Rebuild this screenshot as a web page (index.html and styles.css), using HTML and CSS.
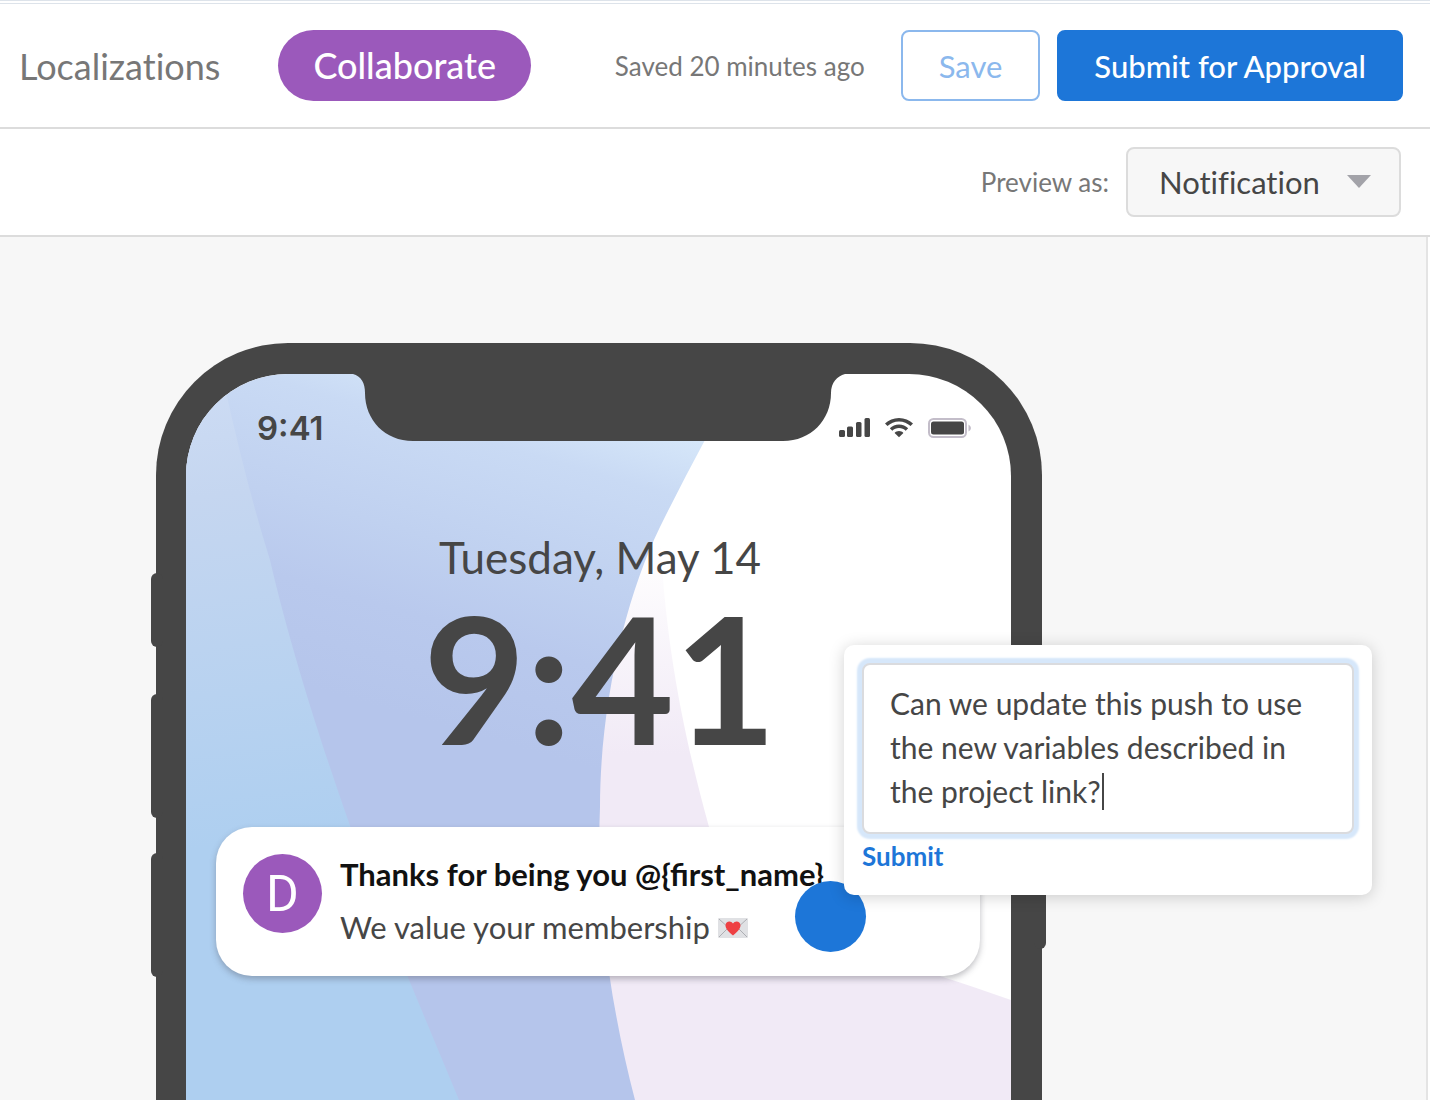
FILE: index.html
```html
<!DOCTYPE html>
<html lang="en">
<head>
  <meta charset="UTF-8" />
  <meta name="viewport" content="width=device-width, initial-scale=1" />
  <title>Push preview</title>
  <link rel="stylesheet" href="styles.css">
</head>
<body>
  <header class="topbar">
    <nav class="tabs">
      <a href="#localizations" class="tab">Localizations</a>
      <a href="#collaborate" class="tab active">Collaborate</a>
    </nav>
    <div class="actions">
      <span class="saved">Saved 20 minutes ago</span>
      <button type="button" class="btn btn-outline">Save</button>
      <button type="button" class="btn btn-primary">Submit for Approval</button>
    </div>
  </header>

  <div class="toolbar">
    <label for="previewAs">Preview as:</label>
    <div class="select">
      <select id="previewAs">
        <option>Notification</option>
      </select>
      <svg class="select-arrow" viewBox="0 0 24 13" aria-hidden="true"><path d="M0 0h24L12 13z" /></svg>
    </div>
  </div>

  <main class="stage">
    <div class="phone">
      <span class="side-button mute"></span>
      <span class="side-button volume-up"></span>
      <span class="side-button volume-down"></span>
      <span class="side-button power"></span>

      <div class="screen">
        <svg class="wallpaper" viewBox="0 0 825 1600" preserveAspectRatio="xMidYMin slice" aria-hidden="true">
          <defs>
            <linearGradient id="sky" gradientUnits="userSpaceOnUse" x1="60" y1="0" x2="120" y2="460">
              <stop offset="0" stop-color="#cddcf4" />
              <stop offset="0.25" stop-color="#c5d6f0" />
              <stop offset="1" stop-color="#aecff0" />
            </linearGradient>
            <linearGradient id="iris" gradientUnits="userSpaceOnUse" x1="530" y1="60" x2="420" y2="440">
              <stop offset="0" stop-color="#d8e9fa" />
              <stop offset="0.18" stop-color="#c9daf4" />
              <stop offset="0.45" stop-color="#c0d1f0" />
              <stop offset="0.65" stop-color="#b9c9ed" />
              <stop offset="0.9" stop-color="#b5c5eb" />
            </linearGradient>
            <linearGradient id="petal" gradientUnits="userSpaceOnUse" x1="0" y1="170" x2="0" y2="380">
              <stop offset="0" stop-color="#fff" />
              <stop offset="1" stop-color="#f1eaf6" />
            </linearGradient>
          </defs>
          <rect width="825" height="1600" fill="#fff" />
          <path d="M474 153C478 270 500 370 523 453C570 560 700 580 825 626V1600H400V153z" fill="url(#petal)" />
          <path d="M0 0H556Q512 76 474 153C440 222 414 330 414 433C410 530 424 630 449 726L700 1600H0z" fill="url(#iris)" />
          <path d="M0 0H36Q60 110 84 186C108 290 156 440 216 589L273 726L640 1600H0z" fill="url(#sky)" />
        </svg>
        <svg class="notch" viewBox="0 0 492 67" aria-hidden="true">
          <path d="M0 0C8 2 12 9 12 19C12 46 32 67 60 67H430C458 67 478 46 478 19C478 9 484 2 492 0z" />
        </svg>

        <div class="status">
          <span class="status-time">9:41</span>
          <div class="status-icons">
            <svg width="31" height="20" viewBox="0 0 31 20" aria-hidden="true">
              <rect x="0" y="12" width="6" height="7" rx="1.5" />
              <rect x="8" y="8.5" width="6" height="10.5" rx="1.5" />
              <rect x="17" y="4" width="5.5" height="15" rx="1.5" />
              <rect x="25.5" y="0" width="5.5" height="19" rx="1.5" />
            </svg>
            <svg width="28" height="20" viewBox="0 0 28 20" aria-hidden="true">
              <path d="M14 0C8.5 0 3.6 2.1 0 5.6L2.5 8.1C5.5 5.2 9.5 3.5 14 3.5S22.5 5.2 25.5 8.1L28 5.6C24.4 2.1 19.5 0 14 0z" />
              <path d="M14 6.5C10.4 6.5 7.2 7.9 4.8 10.2L7.3 12.7C9.1 11 11.4 10 14 10S18.9 11 20.7 12.7L23.2 10.2C20.8 7.9 17.6 6.5 14 6.5z" />
              <path d="M14 13C12.3 13 10.7 13.7 9.6 14.9L14 19.3L18.4 14.9C17.3 13.7 15.7 13 14 13z" />
            </svg>
            <svg width="44" height="20" viewBox="0 0 44 20" aria-hidden="true">
              <rect x="1" y="1" width="37" height="18" rx="4.5" class="battery-case" />
              <rect x="3" y="3.5" width="33" height="13" rx="2.5" />
              <path d="M40.5 6.5Q43 8 43 10T40.5 13.5z" class="battery-tip" />
            </svg>
          </div>
        </div>

        <div class="clock">
          <div class="date">Tuesday, May 14</div>
          <div class="time">9:41</div>
        </div>

        <article class="push">
          <div class="avatar">D</div>
          <div class="push-body">
            <h2>Thanks for being you @{first_name}</h2>
            <p>We value your membership
              <svg class="letter" viewBox="0 0 30 20" role="img" aria-label="love letter">
                <rect width="30" height="20" rx="1" fill="#e0e1e4" />
                <path d="M1 1L12 11M29 1L18 11M1 19L10 10M29 19L20 10" stroke="#adaeb3" fill="none" />
                <path d="M15 17.5C11 14 7.5 11 7.5 7.5C7.5 3 13 2 15 5.5C17 2 22.5 3 22.5 7.5C22.5 11 19 14 15 17.5z" fill="#ee4043" />
              </svg>
            </p>
          </div>
        </article>
      </div>

      <button type="button" class="pin" aria-label="Comment"></button>

      <form class="comment">
        <div class="comment-field">
          <textarea aria-label="Comment" rows="3">Can we update this push to use the new variables described in the project link?</textarea>
          <span class="caret"></span>
        </div>
        <button type="submit" class="comment-submit">Submit</button>
      </form>
    </div>
  </main>
</body>
</html>
```
FILE: styles.css
```css
* {
  box-sizing: border-box;
}

body {
  margin: 0;
  height: 100vh;
  overflow: hidden;
  display: flex;
  flex-direction: column;
  font-family: Lato, sans-serif;
  color: #464646;
  background: #fff;
}

button, select, textarea {
  font-family: inherit;
  color: inherit;
}

/* Header */
.topbar {
  display: flex;
  justify-content: space-between;
  align-items: center;
  height: 129px;
  padding: 0 27px 0 19px;
  border-top: 4px double #dde3ea;
  border-bottom: 2px solid #dcdcdc;
}

.tabs {
  display: flex;
  align-items: center;
  gap: 58px;
}

.tab {
  font-size: 36px;
  font-variant-ligatures: none;
  color: #777;
  text-decoration: none;
}

.tab.active {
  height: 71px;
  padding: 0 35px;
  line-height: 71px;
  border-radius: 36px;
  background: #9b59bb;
  color: #fff;
  font-weight: 500;
}

.actions {
  display: flex;
  align-items: center;
  gap: 17px;
}

.saved {
  margin-right: 19px;
  font-size: 26px;
  color: #777;
}

.btn {
  height: 71px;
  padding: 0 36px;
  border: 2px solid #1d76d8;
  border-radius: 8px;
  font-size: 31px;
  line-height: 36px;
  cursor: pointer;
}

.btn-outline {
  border-color: #8bb8ed;
  background: #fff;
  color: #8bb8ed;
}

.btn-primary {
  padding: 0 35px;
  background: #1d76d8;
  color: #fff;
  font-weight: 500;
}

/* Preview toolbar */
.toolbar {
  display: flex;
  justify-content: flex-end;
  align-items: center;
  gap: 17px;
  height: 108px;
  padding: 0 29px;
  border-bottom: 2px solid #dcdcdc;
}

.toolbar label {
  font-size: 26px;
  color: #777;
}

.select {
  position: relative;
}

.select select {
  appearance: none;
  width: 275px;
  height: 70px;
  padding: 0 31px;
  border: 2px solid #dcdcdc;
  border-radius: 8px;
  background: #f7f7f7;
  font-size: 31px;
  font-variant-ligatures: none;
}

.select-arrow {
  position: absolute;
  top: 28px;
  right: 30px;
  width: 24px;
  height: 13px;
  fill: #a3a3a9;
  pointer-events: none;
}

/* Phone preview */
.stage {
  flex: 1;
  display: flex;
  margin-right: 2px;
  padding: 106px 30px 0 156px;
  border-right: 2px solid #e4e4e4;
  background: #f7f7f7;
}

.phone {
  position: relative;
  display: flex;
  width: 100%;
  max-width: 886px;
  padding: 31px 31px 0 30px;
  border-radius: 132px 132px 0 0;
  background: #464646;
}

.side-button {
  position: absolute;
  left: -5px;
  width: 12px;
  height: 124px;
  border-radius: 6px;
  background: #464646;
}

.mute {
  top: 230px;
  height: 74px;
}

.volume-up {
  top: 351px;
}

.volume-down {
  top: 510px;
}

.power {
  top: 400px;
  left: auto;
  right: -4px;
  height: 206px;
}

.screen {
  position: relative;
  flex: 1;
  padding: 0 31px 0 30px;
  border-radius: 102px 102px 0 0;
  overflow: hidden;
}

.wallpaper {
  position: absolute;
  top: 0;
  left: 0;
  width: 100%;
}

.notch {
  position: absolute;
  top: 0;
  left: 0;
  right: 0;
  width: 492px;
  margin: 0 auto;
  fill: #464646;
}

.status {
  position: relative;
  display: flex;
  justify-content: space-between;
  align-items: center;
  height: 107px;
  padding: 0 8px 0 41px;
}

.status-time {
  font-family: Inter, sans-serif;
  font-size: 33px;
  font-weight: 600;
}

.status-icons {
  display: flex;
  gap: 15px;
  fill: #464646;
}

.battery-case {
  fill: none;
  stroke: #c3bdc9;
  stroke-width: 2;
}

.battery-tip {
  fill: #c3bdc9;
}

.clock {
  position: relative;
  height: 346px;
  padding: 48px 0 0 4px;
  text-align: center;
}

.date {
  font-size: 44px;
  line-height: 56px;
}

.time {
  font-size: 177px;
  font-weight: 700;
  line-height: 184px;
}

.push {
  position: relative;
  display: flex;
  gap: 18px;
  padding: 21px 27px 22px;
  border-radius: 36px;
  background: #fff;
  box-shadow: 0 3px 6px rgba(70, 70, 80, 0.35);
}

.avatar {
  width: 79px;
  height: 79px;
  margin-top: 6px;
  border-radius: 50%;
  background: #9b59bb;
  color: #fff;
  font-family: Roboto, sans-serif;
  font-size: 50px;
  line-height: 81px;
  text-align: center;
}

.push-body h2,
.push-body p {
  margin: 0;
  font-size: 31px;
  line-height: 53px;
  white-space: nowrap;
}

.push-body h2 {
  color: #111;
}

.letter {
  width: 30px;
  height: 20px;
  vertical-align: 1px;
}

/* Comment pin and popup */
.pin {
  position: absolute;
  top: 538px;
  left: 639px;
  width: 71px;
  height: 71px;
  padding: 0;
  border: none;
  border-radius: 50%;
  background: #1d76d8;
  cursor: pointer;
}

.comment {
  position: absolute;
  top: 302px;
  left: 688px;
  width: 528px;
  height: 250px;
  padding: 18px;
  border-radius: 10px;
  background: #fff;
  box-shadow: 0 2px 16px rgba(0, 0, 0, 0.18);
}

.comment-field {
  position: relative;
}

.comment textarea {
  display: block;
  width: 100%;
  height: 171px;
  padding: 16px 26px;
  border: 2px solid #dadbde;
  border-radius: 8px;
  outline: none;
  box-shadow: 0 0 2px 5px #d6e7fa;
  font-size: 30px;
  line-height: 44px;
  resize: none;
  overflow: hidden;
}

.caret {
  position: absolute;
  top: 110px;
  left: 240px;
  width: 2px;
  height: 37px;
  background: #464646;
}

.comment-submit {
  padding: 0;
  border: none;
  background: none;
  color: #1d76d8;
  font-size: 26px;
  font-weight: 700;
  line-height: 44px;
  cursor: pointer;
}
```
